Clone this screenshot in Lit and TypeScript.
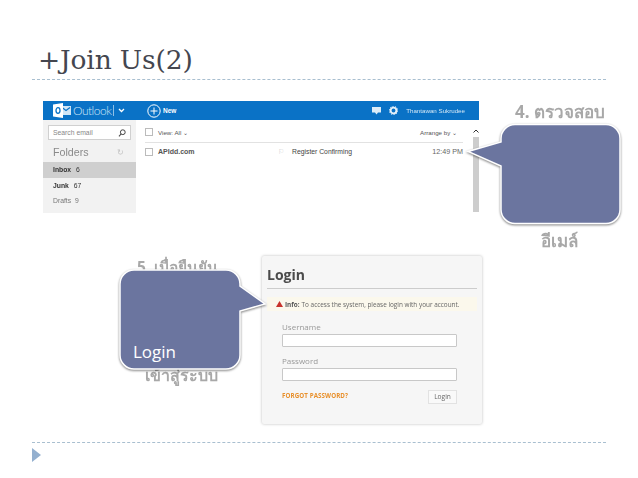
import { LitElement, html, css } from "lit";
import { customElement } from "lit/decorators.js";

@customElement("app-root")
export class AppRoot extends LitElement {
  static styles = css`
    :host { display: block; width: 638px; height: 478px; background: #fff; overflow: hidden; font-family: "Liberation Sans", Arial, sans-serif; }
    .slide { position: relative; width: 638px; height: 478px; padding: 40px 32px 0; box-sizing: border-box; }
    h1 { margin: 0 0 0 6px; font: 400 26.5px/40px "DejaVu Serif", serif; color: #44464f; height: 39px; white-space: nowrap; letter-spacing: -0.15px; }
    .rule { height: 0; border-top: 1px dashed #a9bfd0; width: 574px; }
    .bottom { position: absolute; left: 32px; top: 442px; }
    .tri { position: absolute; left: 32px; top: 448px; width: 0; height: 0; border-left: 9px solid #94b0cf; border-top: 7px solid transparent; border-bottom: 7px solid transparent; }

    .outlook { position: absolute; left: 43px; top: 101px; width: 436px; height: 112px; display: flex; flex-direction: column; overflow: hidden; filter: blur(0.4px); font-size: 7px; color: #444; }
    .ohead { height: 19px; background: #0a72c6; display: flex; align-items: center; color: #fff; flex: none; }
    .logo { margin-left: 10px; width: 19px; height: 15px; flex: none; }
    .brand { font: 300 12px "Lato", sans-serif; letter-spacing: -0.5px; margin-left: 1px; color: #cfe5f6; width: 38px; }
    .sep { width: 1px; height: 11px; background: #8fc0e6; margin: 0 4px 0 2px; }
    .new { display: flex; align-items: center; gap: 2px; margin-left: 22px; font-weight: 700; font-size: 6.5px; }
    .spacer { flex: 1; }
    .uname { font-size: 6.2px; margin: 0 14px 0 8px; color: #d5e8f6; }
    .obody { display: flex; flex: 1; min-height: 0; }
    .pane { width: 93px; background: #f2f2f2; flex: none; display: flex; flex-direction: column; overflow: hidden; }
    .search { margin: 5px 5px 0 5px; height: 15px; background: #fff; border: 1px solid #d0d0d0; box-sizing: border-box; display: flex; align-items: center; justify-content: space-between; padding: 0 4px; color: #888; font-size: 6.8px; flex: none; }
    .folders { font-size: 10.7px; color: #8a8a8a; padding: 6px 12px 0 10px; height: 22px; box-sizing: border-box; display: flex; justify-content: space-between; flex: none; }
    .folders span:last-child { color: #c4c4c4; font-size: 8px; padding-top: 2px; }
    .fitem { height: 15.5px; line-height: 15px; padding-left: 10px; font-size: 6.8px; flex: none; color: #333; }
    .fitem b { margin-right: 3px; }
    .fitem.on { background: #cfcfcf; }
    .fitem.draft { color: #777; }
    .main { flex: 1; padding-left: 9px; display: flex; flex-direction: column; background: #fff; position: relative; }
    .toolbar { height: 23px; display: flex; align-items: center; gap: 5px; border-bottom: 1px solid #e2e2e2; width: 318px; box-sizing: border-box; padding: 2px 6px 0 0; color: #555; flex: none; font-size: 6.2px; }
    .cb { width: 6px; height: 6px; border: 1px solid #bbb; flex: none; }
    .row { height: 17px; width: 318px; display: flex; align-items: center; flex: none; color: #444; }
    .from { width: 120px; margin-left: 5px; font-size: 7px; font-weight: 700; color: #555; }
    .flag { width: 14px; color: #ccc; font-size: 7px; }
    .subject { flex: 1; font-size: 6.8px; }
    .time { font-size: 7.2px; color: #666; }
    .scroll { position: absolute; right: 0; top: 0; width: 6px; height: 100%; display: flex; flex-direction: column; align-items: center; }
    .arrow { height: 17px; padding-top: 7px; box-sizing: border-box; flex: none; }
    .thumb { width: 6px; height: 75px; background: #cdcdcd; flex: none; }

    .bubble { position: absolute; overflow: visible; }
    .b1 { left: 460px; top: 116px; }
    .b2 { left: 112px; top: 262px; }
    .bubble-label { position: absolute; left: 133px; top: 341px; color: #fff; font: 400 17px/22px "Open Sans", sans-serif; }

    .thai { position: absolute; font: 700 17px/20px "Noto Sans", "DejaVu Sans", sans-serif; color: #a8a8a8; filter: blur(0.7px); white-space: nowrap; }
    .t1 { left: 515px; top: 102px; }
    .t2 { left: 541px; top: 231px; }
    .t3 { left: 137px; top: 257px; font-size: 15.5px; }
    .t4 { left: 145px; top: 365px; font-size: 16px; }

    .login { position: absolute; left: 262px; top: 256px; width: 220px; height: 168px; background: #f6f6f6; border-radius: 2px; box-shadow: 0 0 3px #bbb; box-sizing: border-box; padding: 0 5px; font-family: "Open Sans", sans-serif; filter: blur(0.35px); display: flex; flex-direction: column; color: #888; }
    .login h2 { margin: 0; font: 700 14px/20px "Open Sans", sans-serif; color: #4b4b4b; padding: 9px 0 0 0; box-sizing: border-box; border-bottom: 1px solid #ccc; flex: none; height: 33px; }
    .info { height: 14px; margin: 8px 0 0 0; background: #fbf8ec; display: flex; align-items: center; padding-left: 9px; gap: 2px; font-size: 6.4px; color: #666; white-space: nowrap; flex: none; }
    .info b { color: #555; }
    .form { padding: 10px 20px 0 15px; display: flex; flex-direction: column; }
    .lbl { font-size: 8px; height: 12px; line-height: 12px; color: #999; }
    .input { height: 13px; background: #fff; border: 1px solid #c8c8c8; border-radius: 1px; margin: 1px 0 8px; box-sizing: border-box; }
    .foot { display: flex; justify-content: space-between; align-items: flex-start; margin-top: 1px; }
    .forgot { font-size: 6.2px; font-weight: 700; color: #e8902c; letter-spacing: 0.1px; padding-top: 1px; }
    .btn { width: 29px; height: 14px; background: #f9f9f9; border: 1px solid #e2e2e2; font-size: 6.6px; color: #666; text-align: center; line-height: 12px; box-sizing: border-box; }
  `;

  render() {
    return html`
      <div class="slide">
        <h1>+Join Us(2)</h1>
        <div class="rule"></div>
        <div class="rule bottom"></div>
        <div class="tri"></div>

        <div class="outlook">
          <div class="ohead">
            <svg class="logo" viewBox="0 0 19 15">
              <path d="M8 3h10v9H8z" fill="#cfe5f6"/>
              <path d="M9 4.500l4 3 4-3" fill="none" stroke="#0a72c6" stroke-width="1.2"/>
              <path d="M0 1.500L10 0v15L0 13.500z" fill="#fff"/>
              <ellipse cx="5" cy="7.500" rx="2" ry="2.800" fill="none" stroke="#0a72c6" stroke-width="1.3"/>
            </svg>
            <span class="brand">Outlook</span>
            <span class="sep"></span>
            <svg width="7" height="5" viewBox="0 0 7 5"><path d="M1 1l2.500 2.500L6 1" fill="none" stroke="#fff" stroke-width="1.3"/></svg>
            <div class="new">
              <svg width="14" height="14" viewBox="0 0 14 14"><circle cx="7" cy="7" r="6.200" fill="none" stroke="#fff" stroke-width="1"/><path d="M7 3.500v7M3.500 7h7" stroke="#fff" stroke-width="1"/></svg>
              New
            </div>
            <div class="spacer"></div>
            <svg width="9" height="9" viewBox="0 0 9 9"><path d="M0 1h9v5.500H6L4.500 8.500 3 6.500H0z" fill="#dcecf8"/></svg>
            <svg style="margin-left:8px" width="9" height="9" viewBox="0 0 9 9"><circle cx="4.500" cy="4.500" r="2.900" fill="none" stroke="#e6f1fa" stroke-width="1.900"/><circle cx="4.500" cy="4.500" r="4.200" fill="none" stroke="#e6f1fa" stroke-width="1" stroke-dasharray="1.300 1.300"/></svg>
            <span class="uname">Thantawan Sukrudee</span>
          </div>
          <div class="obody">
            <div class="pane">
              <div class="search">
                <span>Search email</span>
                <svg width="8" height="8" viewBox="0 0 8 8"><circle cx="4.800" cy="3.200" r="2.400" fill="none" stroke="#444" stroke-width="1"/><path d="M3 5L1 7.300" stroke="#444" stroke-width="1.100"/></svg>
              </div>
              <div class="folders"><span>Folders</span><span>↻</span></div>
              <div class="fitem on"><b>Inbox</b> 6</div>
              <div class="fitem"><b>Junk</b> 67</div>
              <div class="fitem draft">Drafts &nbsp;9</div>
            </div>
            <div class="main">
              <div class="toolbar"><span class="cb"></span><span>View: All ⌄</span><span class="spacer"></span><span>Arrange by ⌄</span></div>
              <div class="row">
                <span class="cb"></span>
                <span class="from">APIdd.com</span>
                <span class="flag">⚐</span>
                <span class="subject">Register Confirming</span>
                <span class="time">12:49 PM</span>
              </div>
              <div class="scroll">
                <span class="arrow"><svg width="6" height="4" viewBox="0 0 6 4"><path d="M0.500 3.500L3 1l2.500 2.500" fill="none" stroke="#333" stroke-width="1"/></svg></span>
                <span class="thumb"></span>
              </div>
            </div>
          </div>
        </div>

        <div class="thai t1">4. ตรวจสอบ</div>
        <div class="thai t2">อีเมล์</div>
        <div class="thai t3">5. เมื่อยืนยัน</div>
        <div class="thai t4">เข้าสู่ระบบ</div>

        <div class="login">
          <h2>Login</h2>
          <div class="info">
            <svg width="7" height="6" viewBox="0 0 7 6"><path d="M3.500 0L7 6H0z" fill="#c8332c"/></svg>
            <b>Info:</b> To access the system, please login with your account.
          </div>
          <div class="form">
            <span class="lbl">Username</span>
            <div class="input"></div>
            <span class="lbl">Password</span>
            <div class="input"></div>
            <div class="foot"><span class="forgot">FORGOT PASSWORD?</span><span class="btn">Login</span></div>
          </div>
        </div>

        <svg class="bubble b1" width="170" height="116" viewBox="460 116 170 116">
          <path d="M515 124.500H606A14 14 0 0 1 620 138.500V209.500A14 14 0 0 1 606 223.500H515A14 14 0 0 1 501 209.500V166L468 151.500L501 142V138.500A14 14 0 0 1 515 124.500Z" fill="#6b759f" stroke="#fff" stroke-width="1.500" filter="drop-shadow(0 1px 1.200px rgba(0,0,0,.5))"/>
        </svg>
        <svg class="bubble b2" width="170" height="116" viewBox="112 262 170 116">
          <path d="M134 270H226A14 14 0 0 1 240 284V286L265 304L240 311V355A14 14 0 0 1 226 369H134A14 14 0 0 1 120 355V284A14 14 0 0 1 134 270Z" fill="#6b759f" stroke="#fff" stroke-width="1.500" filter="drop-shadow(0 1px 1.200px rgba(0,0,0,.5))"/>
        </svg>
        <div class="bubble-label">Login</div>
      </div>
    `;
  }
}
